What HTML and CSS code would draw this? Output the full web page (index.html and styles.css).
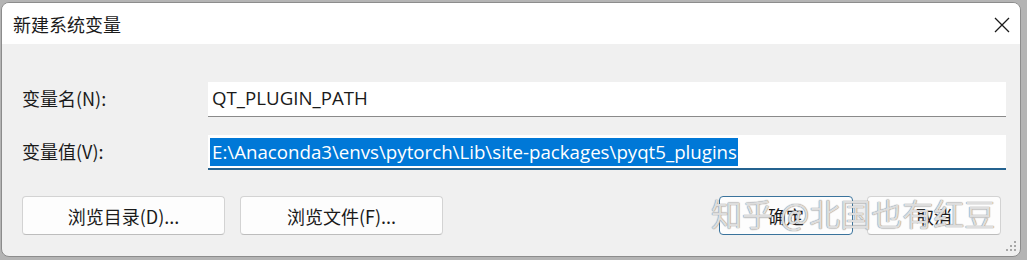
FILE: index.html
```html
<!DOCTYPE HTML><html>
<head>
  <title>新建系统变量</title>
  <meta name="viewport" content="width=device-width, initial-scale=1">
  <link rel="stylesheet" href="styles.css">
</head>
<body>
  <div class="window">
    <div class="titlebar">
      <span class="title">新建系统变量</span>
      <svg class="close" width="16" height="16" viewBox="0 0 16 16">
        <path d="M1 1 L15 15 M15 1 L1 15" stroke="#1a1a1a" stroke-width="1.3" fill="none"/>
      </svg>
    </div>
    <div class="content">
      <div class="field">
        <span class="label">变量名(N):</span>
        <div class="input">QT_PLUGIN_PATH</div>
      </div>
      <div class="field">
        <span class="label">变量值(V):</span>
        <div class="input focused"><span class="sel">E:\Anaconda3\envs\pytorch\Lib\site-packages\pyqt5_plugins</span></div>
      </div>
      <div class="buttons">
        <button class="button wide">浏览目录(D)...</button>
        <button class="button wide">浏览文件(F)...</button>
        <span class="spacer"></span>
        <button class="button default">确定</button>
        <button class="button">取消</button>
      </div>
      <div class="watermark">知乎 @北国也有红豆</div>
      <svg class="grip" width="12" height="12" viewBox="0 0 12 12">
        <rect x="8" y="0" width="2" height="2" fill="#a8a8a8"/>
        <rect x="4" y="4" width="2" height="2" fill="#a8a8a8"/>
        <rect x="8" y="4" width="2" height="2" fill="#a8a8a8"/>
        <rect x="0" y="8" width="2" height="2" fill="#a8a8a8"/>
        <rect x="4" y="8" width="2" height="2" fill="#a8a8a8"/>
        <rect x="8" y="8" width="2" height="2" fill="#a8a8a8"/>
      </svg>
    </div>
  </div>
</body>
</html>
```

FILE: styles.css
```css
html {
  font-family: "Noto Sans CJK SC", sans-serif;
}
body {
  margin: 0;
  height: 260px;
  overflow: hidden;
  background-color: #b4b4b4;
}
.window {
  margin: 2px 0 0 1px;
  width: 1018px;
  height: 253px;
  border: 1px solid #8c8c8c;
  border-radius: 8px;
  overflow: hidden;
  background-color: #f0f0f0;
  display: flex;
  flex-direction: column;
}
.titlebar {
  height: 41px;
  flex-shrink: 0;
  background-color: #fff;
  display: flex;
  align-items: center;
  justify-content: space-between;
  padding: 0 10px 0 11px;
}
.title {
  font-size: 18px;
  color: #1a1a1a;
}
.close {
  margin-top: 2px;
}
.content {
  position: relative;
  flex: 1;
  padding: 38px 14px 0 20px;
  display: flex;
  flex-direction: column;
  gap: 18px;
}
.field {
  display: flex;
  align-items: center;
  height: 35px;
}
.label {
  width: 186px;
  font-size: 18px;
  color: #1a1a1a;
  margin-bottom: 4px;
}
.input {
  flex: 1;
  height: 35px;
  box-sizing: border-box;
  background-color: #fff;
  border-bottom: 1px solid #8a8a8a;
  padding: 0 0 4px 4px;
  display: flex;
  align-items: center;
  font-family: "Open Sans", sans-serif;
  font-size: 18.7px;
  color: #1a1a1a;
}
.input.focused {
  border-bottom: 2px solid #24628f;
  padding: 0 0 0 2px;
}
.sel {
  background-color: #0078d7;
  color: #fff;
  line-height: 28px;
  padding: 0 1px 0 2px;
}
.buttons {
  display: flex;
  gap: 15px;
  margin-top: 8px;
  padding-right: 5px;
}
.spacer {
  flex: 1;
}
.button {
  width: 134px;
  height: 39px;
  background-color: #fdfdfd;
  border: 1px solid #d3d3d3;
  border-bottom-color: #bdbdbd;
  border-radius: 4px;
  font-family: "Noto Sans CJK SC", sans-serif;
  font-size: 18px;
  color: #1a1a1a;
}
.button.wide {
  width: 203px;
}
.button.default {
  border-color: #3a739c;
  margin-right: -1px;
}
.watermark {
  position: absolute;
  left: 709px;
  top: 146px;
  font-size: 31px;
  color: rgba(255, 255, 255, 0.75);
  text-shadow: 0 0 1px #777, 0 0 1px #999;
  white-space: nowrap;
}
.grip {
  position: absolute;
  right: 2px;
  bottom: 3px;
}
```
